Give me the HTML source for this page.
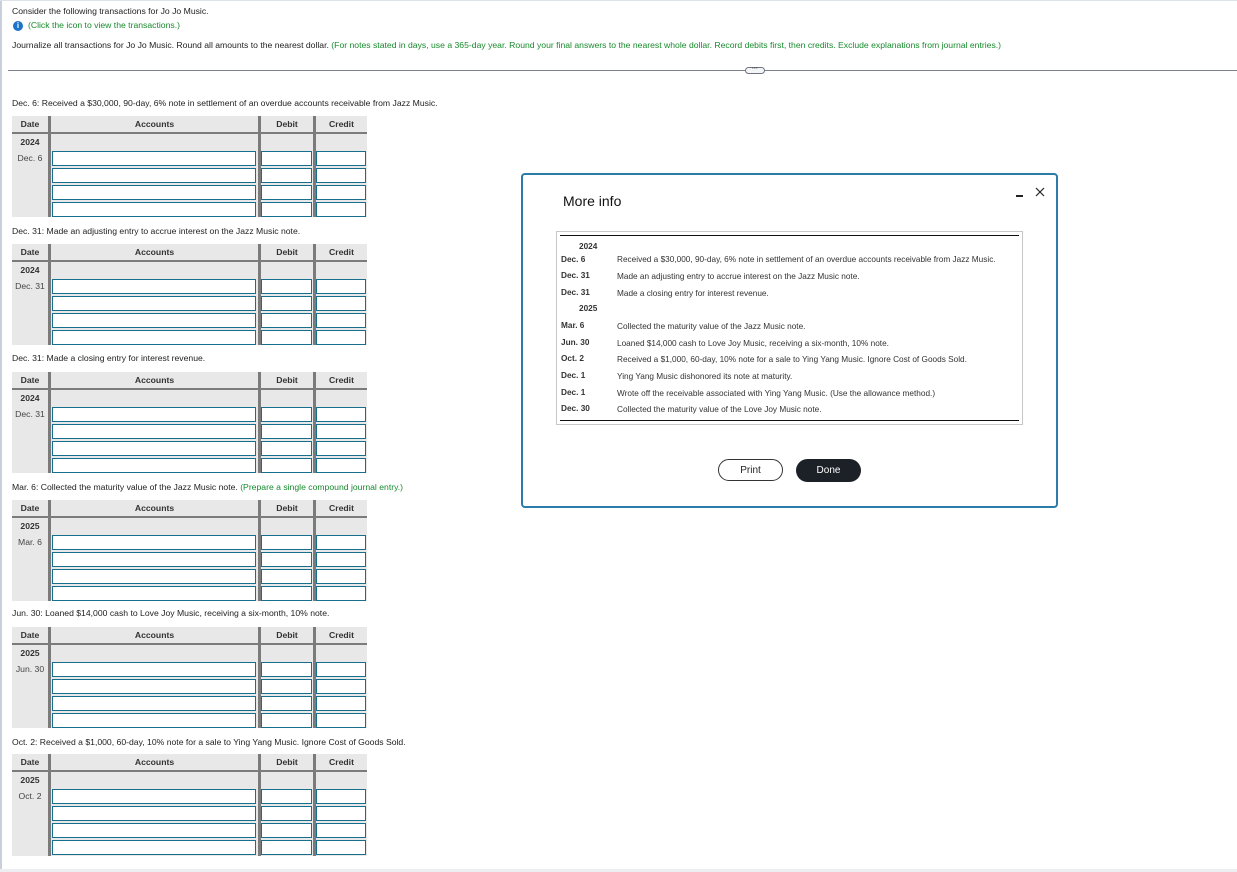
<!DOCTYPE html>
<html><head><meta charset="utf-8"><style>
*{margin:0;padding:0;box-sizing:border-box}
body{width:1237px;height:872px;position:relative;background:#fff;font-family:"Liberation Sans",Arial,sans-serif;font-size:8.65px;color:#222;overflow:hidden}
.a{position:absolute;white-space:nowrap}
.g{color:#178a2c}
.sec{position:absolute;left:0;width:460px;height:130px}
.lbl{position:absolute;left:12px;top:0}
.tb{position:absolute;left:12px;top:17px;width:355px;height:101px;background:#e8e8e8}
.vs{position:absolute;top:0;width:3px;height:101px;background:#7b7b7b}
.hb{position:absolute;left:0;top:16px;width:355px;height:2px;background:#7b7b7b}
.h{position:absolute;top:3px;font-weight:bold;text-align:center;color:#333}
.yr{position:absolute;left:0;width:36px;top:21px;text-align:center;font-weight:bold;color:#333}
.dt{position:absolute;left:0;width:36px;top:37px;text-align:center;color:#444}
.in{position:absolute;height:15px;background:#fff;border:1px solid #156f8d}
.m{font-size:8.25px;color:#333}
</style></head><body>
<div class="a" style="left:0;top:0;width:2px;height:872px;background:#c9cfdb"></div>
<div class="a" style="left:0;top:0;width:1237px;height:1px;background:#dde1e8"></div>
<div class="a" style="left:0;top:869px;width:1237px;height:3px;background:#eceef1"></div>

<div class="a" style="left:12px;top:6px">Consider the following transactions for Jo Jo Music.</div>
<div class="a" style="left:13px;top:21px;width:10px;height:10px;border-radius:50%;background:#1a73c9;color:#fff;font-weight:bold;font-size:8px;text-align:center;line-height:10px">i</div>
<div class="a g" style="left:28px;top:20px">(Click the icon to view the transactions.)</div>
<div class="a" style="left:12px;top:40px">Journalize all transactions for Jo Jo Music. Round all amounts to the nearest dollar. <span class="g">(For notes stated in days, use a 365-day year. Round your final answers to the nearest whole dollar. Record debits first, then credits. Exclude explanations from journal entries.)</span></div>
<div class="a" style="left:8px;top:70px;width:1229px;height:1px;background:#7a8290"></div>
<div class="a" style="left:745px;top:67px;width:20px;height:7px;border:1px solid #6d7480;border-radius:4px;background:#f4f5f7;font-size:6px;line-height:3px;text-align:center;color:#333;font-weight:bold">&middot;&middot;&middot;</div>

<div class="sec" style="top:98px"><div class="lbl">Dec. 6: Received a $30,000, 90-day, 6% note in settlement of an overdue accounts receivable from Jazz Music.</div>
<div class="tb" style="top:18px"><div class="vs" style="left:36px"></div><div class="vs" style="left:246px"></div><div class="vs" style="left:301px"></div><div class="hb"></div>
<div class="h" style="left:0;width:36px">Date</div><div class="h" style="left:39px;width:207px">Accounts</div><div class="h" style="left:249px;width:52px">Debit</div><div class="h" style="left:304px;width:51px">Credit</div>
<div class="yr">2024</div><div class="dt">Dec. 6</div>
<div class="in" style="left:40px;top:35px;width:204px"></div><div class="in" style="left:249px;top:35px;width:51px"></div><div class="in" style="left:304px;top:35px;width:50px"></div>
<div class="in" style="left:40px;top:52px;width:204px"></div><div class="in" style="left:249px;top:52px;width:51px"></div><div class="in" style="left:304px;top:52px;width:50px"></div>
<div class="in" style="left:40px;top:69px;width:204px"></div><div class="in" style="left:249px;top:69px;width:51px"></div><div class="in" style="left:304px;top:69px;width:50px"></div>
<div class="in" style="left:40px;top:86px;width:204px"></div><div class="in" style="left:249px;top:86px;width:51px"></div><div class="in" style="left:304px;top:86px;width:50px"></div>
</div></div>

<div class="sec" style="top:226px"><div class="lbl">Dec. 31: Made an adjusting entry to accrue interest on the Jazz Music note.</div>
<div class="tb" style="top:18px"><div class="vs" style="left:36px"></div><div class="vs" style="left:246px"></div><div class="vs" style="left:301px"></div><div class="hb"></div>
<div class="h" style="left:0;width:36px">Date</div><div class="h" style="left:39px;width:207px">Accounts</div><div class="h" style="left:249px;width:52px">Debit</div><div class="h" style="left:304px;width:51px">Credit</div>
<div class="yr">2024</div><div class="dt">Dec. 31</div>
<div class="in" style="left:40px;top:35px;width:204px"></div><div class="in" style="left:249px;top:35px;width:51px"></div><div class="in" style="left:304px;top:35px;width:50px"></div>
<div class="in" style="left:40px;top:52px;width:204px"></div><div class="in" style="left:249px;top:52px;width:51px"></div><div class="in" style="left:304px;top:52px;width:50px"></div>
<div class="in" style="left:40px;top:69px;width:204px"></div><div class="in" style="left:249px;top:69px;width:51px"></div><div class="in" style="left:304px;top:69px;width:50px"></div>
<div class="in" style="left:40px;top:86px;width:204px"></div><div class="in" style="left:249px;top:86px;width:51px"></div><div class="in" style="left:304px;top:86px;width:50px"></div>
</div></div>

<div class="sec" style="top:353px"><div class="lbl">Dec. 31: Made a closing entry for interest revenue.</div>
<div class="tb" style="top:19px"><div class="vs" style="left:36px"></div><div class="vs" style="left:246px"></div><div class="vs" style="left:301px"></div><div class="hb"></div>
<div class="h" style="left:0;width:36px">Date</div><div class="h" style="left:39px;width:207px">Accounts</div><div class="h" style="left:249px;width:52px">Debit</div><div class="h" style="left:304px;width:51px">Credit</div>
<div class="yr">2024</div><div class="dt">Dec. 31</div>
<div class="in" style="left:40px;top:35px;width:204px"></div><div class="in" style="left:249px;top:35px;width:51px"></div><div class="in" style="left:304px;top:35px;width:50px"></div>
<div class="in" style="left:40px;top:52px;width:204px"></div><div class="in" style="left:249px;top:52px;width:51px"></div><div class="in" style="left:304px;top:52px;width:50px"></div>
<div class="in" style="left:40px;top:69px;width:204px"></div><div class="in" style="left:249px;top:69px;width:51px"></div><div class="in" style="left:304px;top:69px;width:50px"></div>
<div class="in" style="left:40px;top:86px;width:204px"></div><div class="in" style="left:249px;top:86px;width:51px"></div><div class="in" style="left:304px;top:86px;width:50px"></div>
</div></div>

<div class="sec" style="top:482px"><div class="lbl">Mar. 6: Collected the maturity value of the Jazz Music note. <span class="g">(Prepare a single compound journal entry.)</span></div>
<div class="tb" style="top:18px"><div class="vs" style="left:36px"></div><div class="vs" style="left:246px"></div><div class="vs" style="left:301px"></div><div class="hb"></div>
<div class="h" style="left:0;width:36px">Date</div><div class="h" style="left:39px;width:207px">Accounts</div><div class="h" style="left:249px;width:52px">Debit</div><div class="h" style="left:304px;width:51px">Credit</div>
<div class="yr">2025</div><div class="dt">Mar. 6</div>
<div class="in" style="left:40px;top:35px;width:204px"></div><div class="in" style="left:249px;top:35px;width:51px"></div><div class="in" style="left:304px;top:35px;width:50px"></div>
<div class="in" style="left:40px;top:52px;width:204px"></div><div class="in" style="left:249px;top:52px;width:51px"></div><div class="in" style="left:304px;top:52px;width:50px"></div>
<div class="in" style="left:40px;top:69px;width:204px"></div><div class="in" style="left:249px;top:69px;width:51px"></div><div class="in" style="left:304px;top:69px;width:50px"></div>
<div class="in" style="left:40px;top:86px;width:204px"></div><div class="in" style="left:249px;top:86px;width:51px"></div><div class="in" style="left:304px;top:86px;width:50px"></div>
</div></div>

<div class="sec" style="top:608px"><div class="lbl">Jun. 30: Loaned $14,000 cash to Love Joy Music, receiving a six-month, 10% note.</div>
<div class="tb" style="top:19px"><div class="vs" style="left:36px"></div><div class="vs" style="left:246px"></div><div class="vs" style="left:301px"></div><div class="hb"></div>
<div class="h" style="left:0;width:36px">Date</div><div class="h" style="left:39px;width:207px">Accounts</div><div class="h" style="left:249px;width:52px">Debit</div><div class="h" style="left:304px;width:51px">Credit</div>
<div class="yr">2025</div><div class="dt">Jun. 30</div>
<div class="in" style="left:40px;top:35px;width:204px"></div><div class="in" style="left:249px;top:35px;width:51px"></div><div class="in" style="left:304px;top:35px;width:50px"></div>
<div class="in" style="left:40px;top:52px;width:204px"></div><div class="in" style="left:249px;top:52px;width:51px"></div><div class="in" style="left:304px;top:52px;width:50px"></div>
<div class="in" style="left:40px;top:69px;width:204px"></div><div class="in" style="left:249px;top:69px;width:51px"></div><div class="in" style="left:304px;top:69px;width:50px"></div>
<div class="in" style="left:40px;top:86px;width:204px"></div><div class="in" style="left:249px;top:86px;width:51px"></div><div class="in" style="left:304px;top:86px;width:50px"></div>
</div></div>

<div class="sec" style="top:737px"><div class="lbl">Oct. 2: Received a $1,000, 60-day, 10% note for a sale to Ying Yang Music. Ignore Cost of Goods Sold.</div>
<div class="tb" style="top:17px;height:102px"><div class="vs" style="left:36px;height:102px"></div><div class="vs" style="left:246px;height:102px"></div><div class="vs" style="left:301px;height:102px"></div><div class="hb"></div>
<div class="h" style="left:0;width:36px">Date</div><div class="h" style="left:39px;width:207px">Accounts</div><div class="h" style="left:249px;width:52px">Debit</div><div class="h" style="left:304px;width:51px">Credit</div>
<div class="yr">2025</div><div class="dt">Oct. 2</div>
<div class="in" style="left:40px;top:35px;width:204px"></div><div class="in" style="left:249px;top:35px;width:51px"></div><div class="in" style="left:304px;top:35px;width:50px"></div>
<div class="in" style="left:40px;top:52px;width:204px"></div><div class="in" style="left:249px;top:52px;width:51px"></div><div class="in" style="left:304px;top:52px;width:50px"></div>
<div class="in" style="left:40px;top:69px;width:204px"></div><div class="in" style="left:249px;top:69px;width:51px"></div><div class="in" style="left:304px;top:69px;width:50px"></div>
<div class="in" style="left:40px;top:86px;width:204px"></div><div class="in" style="left:249px;top:86px;width:51px"></div><div class="in" style="left:304px;top:86px;width:50px"></div>
</div></div>

<div class="a" style="left:521px;top:173px;width:537px;height:335px;border:2px solid #2b7ca8;border-radius:4px;background:#fff">
<div class="a" style="left:40px;top:18px;font-size:14px;color:#111">More info</div>
<div class="a" style="left:493px;top:20px;width:7px;height:2px;background:#222"></div>
<svg class="a" style="left:512px;top:12px" width="10" height="10" viewBox="0 0 10 10"><path d="M1 1L9 9M9 1L1 9" stroke="#222" stroke-width="1.2"/></svg>
<div class="a" style="left:33px;top:56px;width:467px;height:194px;border:1px solid #c8c8c8">
<div class="a" style="left:3px;top:3px;width:459px;height:1px;background:#111"></div>
<div class="a" style="left:3px;top:188px;width:459px;height:1px;background:#111"></div>
<div class="a m" style="left:22px;top:10px;font-weight:bold">2024</div>
<div class="a m" style="left:4px;top:23px;font-weight:bold">Dec. 6</div><div class="a m" style="left:60px;top:23px">Received a $30,000, 90-day, 6% note in settlement of an overdue accounts receivable from Jazz Music.</div>
<div class="a m" style="left:4px;top:39px;font-weight:bold">Dec. 31</div><div class="a m" style="left:60px;top:40px">Made an adjusting entry to accrue interest on the Jazz Music note.</div>
<div class="a m" style="left:4px;top:56px;font-weight:bold">Dec. 31</div><div class="a m" style="left:60px;top:57px">Made a closing entry for interest revenue.</div>
<div class="a m" style="left:22px;top:72px;font-weight:bold">2025</div>
<div class="a m" style="left:4px;top:89px;font-weight:bold">Mar. 6</div><div class="a m" style="left:60px;top:90px">Collected the maturity value of the Jazz Music note.</div>
<div class="a m" style="left:4px;top:106px;font-weight:bold">Jun. 30</div><div class="a m" style="left:60px;top:107px">Loaned $14,000 cash to Love Joy Music, receiving a six-month, 10% note.</div>
<div class="a m" style="left:4px;top:122px;font-weight:bold">Oct. 2</div><div class="a m" style="left:60px;top:123px">Received a $1,000, 60-day, 10% note for a sale to Ying Yang Music. Ignore Cost of Goods Sold.</div>
<div class="a m" style="left:4px;top:139px;font-weight:bold">Dec. 1</div><div class="a m" style="left:60px;top:140px">Ying Yang Music dishonored its note at maturity.</div>
<div class="a m" style="left:4px;top:156px;font-weight:bold">Dec. 1</div><div class="a m" style="left:60px;top:157px">Wrote off the receivable associated with Ying Yang Music. (Use the allowance method.)</div>
<div class="a m" style="left:4px;top:172px;font-weight:bold">Dec. 30</div><div class="a m" style="left:60px;top:173px">Collected the maturity value of the Love Joy Music note.</div>
</div>
<div class="a" style="left:195px;top:284px;width:65px;height:22px;border:1px solid #333;border-radius:11px;font-size:10px;line-height:21px;text-align:center;color:#222">Print</div>
<div class="a" style="left:273px;top:284px;width:65px;height:23px;border-radius:12px;background:#1c2027;font-size:10px;line-height:23px;text-align:center;color:#fff">Done</div>
</div>
</body></html>
